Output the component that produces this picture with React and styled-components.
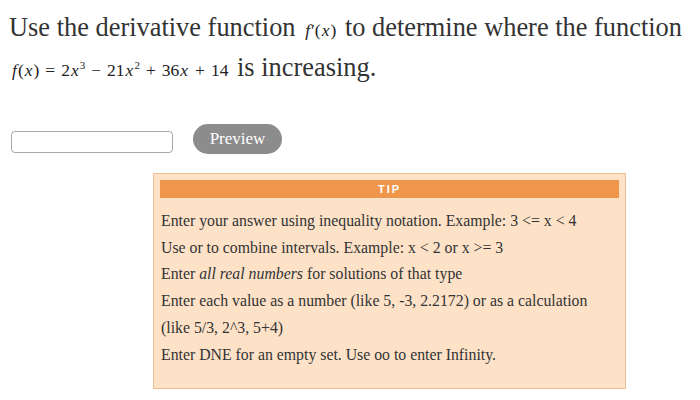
import React from "react";
import styled, { createGlobalStyle } from "styled-components";

const GlobalStyle = createGlobalStyle`
  body {
    margin: 0;
    background: #fff;
    color: #333;
    font-family: "Liberation Serif", "Times New Roman", serif;
  }
`;

const Page = styled.div`
  width: 700px;
  height: 400px;
  padding: 0 0 0 9px;
  box-sizing: border-box;
  overflow: hidden;
`;

const Question = styled.p`
  margin: 9px 0 0;
  font-size: 26.4px;
  line-height: 37px;
  white-space: nowrap;
`;

const Math = styled.span`
  font-family: "Liberation Serif", "Times New Roman", serif;
  font-size: 17.5px;
  color: #222;
  padding: 0 2px;
`;

const V = styled.i`
  font-style: italic;
  padding: 0 1px;
`;

const Sup = styled.sup`
  font-size: 11px;
  line-height: 0;
`;

const Op = styled.span`
  padding: 0 6px;
`;

const AnswerRow = styled.div`
  display: flex;
  align-items: center;
  gap: 20px;
  margin: 35px 0 0 2px;
`;

const Input = styled.input`
  width: 162px;
  height: 22px;
  box-sizing: border-box;
  border: 1px solid #a8a8a8;
  border-radius: 4px;
  background: #fff;
  margin-top: 5px;
`;

const PreviewButton = styled.button`
  width: 89px;
  height: 30px;
  border: none;
  border-radius: 15px;
  background: #8c8c8c;
  color: #fff;
  font-family: "Liberation Serif", "Times New Roman", serif;
  font-size: 17px;
  padding: 0;
`;

const TipBox = styled.div`
  width: 473px;
  height: 216px;
  box-sizing: border-box;
  margin: 19px 0 0 144px;
  background: #fde2c8;
  border: 1px solid #efbe94;
  padding: 6px 6px 0;
`;

const TipHeader = styled.div`
  height: 18px;
  background: #f0964a;
  color: #fff;
  font-family: "Liberation Sans", Arial, sans-serif;
  font-weight: bold;
  font-size: 11px;
  letter-spacing: 2px;
  line-height: 18px;
  text-align: center;
`;

const TipList = styled.div`
  padding: 10px 0 0 1px;
`;

const TipLine = styled.p`
  margin: 0;
  font-size: 15.8px;
  line-height: 26.7px;
  color: #333;
  white-space: nowrap;
`;

const tips = [
  "Enter your answer using inequality notation. Example: 3 <= x < 4",
  "Use or to combine intervals. Example: x < 2 or x >= 3",
  <>
    Enter <i>all real numbers</i> for solutions of that type
  </>,
  "Enter each value as a number (like 5, -3, 2.2172) or as a calculation",
  "(like 5/3, 2^3, 5+4)",
  "Enter DNE for an empty set. Use oo to enter Infinity.",
];

export default function App() {
  return (
    <Page>
      <GlobalStyle />
      <Question>
        Use the derivative function{" "}
        <Math>
          <V>f</V>′(<V>x</V>)
        </Math>{" "}
        to determine where the function
        <br />
        <Math>
          <V>f</V>(<V>x</V>)<Op>=</Op>2<V>x</V>
          <Sup>3</Sup>
          <Op>−</Op>21<V>x</V>
          <Sup>2</Sup>
          <Op>+</Op>36<V>x</V>
          <Op>+</Op>14
        </Math>{" "}
        is increasing.
      </Question>
      <AnswerRow>
        <Input type="text" />
        <PreviewButton>Preview</PreviewButton>
      </AnswerRow>
      <TipBox>
        <TipHeader>TIP</TipHeader>
        <TipList>
          {tips.map((t, i) => (
            <TipLine key={i}>{t}</TipLine>
          ))}
        </TipList>
      </TipBox>
    </Page>
  );
}
